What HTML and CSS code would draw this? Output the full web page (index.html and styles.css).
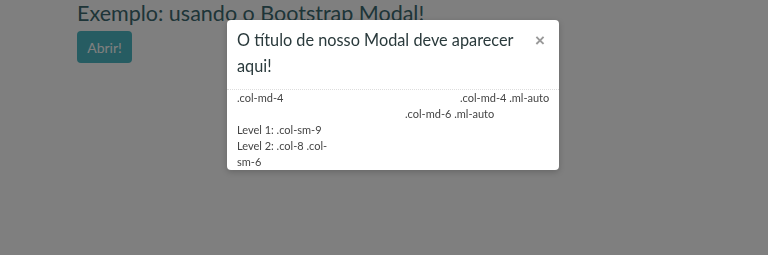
FILE: index.html
```html
<!DOCTYPE html>
<html lang="pt-BR">
<head>
    <meta charset="UTF-8">
    <meta name="viewport" content="width=device-width, initial-scale=1.0">
    <title>Exemplo: usando o Bootstrap Modal</title>
    <link rel="stylesheet" href="styles.css">
</head>
<body>
    <div class="container">
        <h1>Exemplo: usando o Bootstrap Modal!</h1>
        <button class="btn-abrir">Abrir!</button>
    </div>

    <!-- fundo escuro do modal -->
    <div class="backdrop"></div>

    <div class="modal">
        <div class="modal-header">
            <h5 class="modal-title">O título de nosso Modal deve aparecer aqui!</h5>
            <button class="close">&times;</button>
        </div>
        <div class="modal-body">
            <div class="row">
                <div class="col-4">.col-md-4</div>
                <div class="col-4 ml-auto">.col-md-4 .ml-auto</div>
            </div>
            <div class="row">
                <div class="col-6 ml-auto">.col-md-6 .ml-auto</div>
            </div>
            <div class="row">
                <div class="col-nested">
                    Level 1: .col-sm-9
                    <div>Level 2: .col-8 .col-<wbr>sm-6</div>
                </div>
            </div>
        </div>
    </div>
</body>
</html>
```

FILE: styles.css
```css
body {
    margin: 0;
    font-family: Lato, "Liberation Sans", sans-serif;
    background-color: #fff;
    color: #333;
}
.container {
    padding: 0 0 0 77px;
}
h1 {
    margin: -1px 0 3px;
    font-size: 21.5px;
    font-weight: 400;
    line-height: 29px;
    color: #3c6a70;
}
.btn-abrir {
    width: 55px;
    height: 32px;
    padding: 0;
    font-family: inherit;
    font-size: 14px;
    color: #fff;
    background-color: #4cb8c4;
    border: none;
    border-radius: 4px;
}
.backdrop {
    position: fixed;
    top: 0;
    left: 0;
    right: 0;
    bottom: 0;
    background-color: rgba(0, 0, 0, 0.5);
}
.modal {
    position: absolute;
    top: 20px;
    left: 227px;
    width: 332px;
    background: #fff;
    border-radius: 4px;
    box-shadow: 0 2px 6px rgba(0, 0, 0, 0.2);
}
.modal-header {
    display: flex;
    align-items: flex-start;
    padding: 7px 14px 10px 10px;
    border-bottom: 1px dotted #ddd;
}
.modal-title {
    flex: 1;
    margin: 0;
    font-size: 16.3px;
    font-weight: 400;
    line-height: 26px;
    color: #2a3a3c;
}
.close {
    padding: 0;
    margin: 5px 0 0 4px;
    font-size: 17px;
    font-weight: 700;
    line-height: 1;
    color: #999;
    background: none;
    border: none;
}
.modal-body {
    padding: 0 0 0 10px;
    font-size: 11px;
    line-height: 16px;
    color: #444;
}
.row {
    display: flex;
    width: 336px;
}
.col-4 {
    width: 113px;
}
.col-6 {
    width: 168px;
}
.ml-auto {
    margin-left: auto;
}
.col-nested {
    width: 96px;
}
```
